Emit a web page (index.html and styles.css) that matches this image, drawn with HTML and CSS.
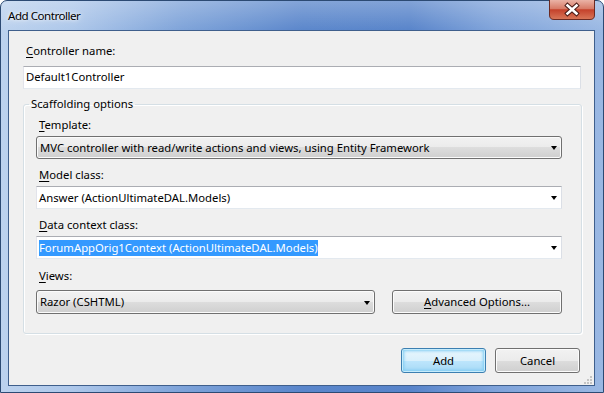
FILE: index.html
```html
<!DOCTYPE html>
<html>
<head>
<meta charset="utf-8">
<link rel="stylesheet" href="styles.css">
</head>
<body>
<div class="window">
  <div class="titlebar">
    <span class="title">Add Controller</span>
    <div class="close">
      <svg width="46" height="20" viewBox="0 0 46 20">
        <defs>
          <linearGradient id="cg" x1="0" y1="0" x2="0" y2="1">
            <stop offset="0" stop-color="#eab3a6"/>
            <stop offset="0.45" stop-color="#d77a66"/>
            <stop offset="0.5" stop-color="#c4412b"/>
            <stop offset="1" stop-color="#d9785a"/>
          </linearGradient>
        </defs>
        <path d="M0.5 0 V15 Q0.5 19.5 5 19.5 H41 Q45.5 19.5 45.5 15 V0" fill="url(#cg)" stroke="#6b2a22"/>
        <path d="M18.5 5.5 L27.5 13.5 M27.5 5.5 L18.5 13.5" stroke="#4a1c18" stroke-width="4.6" stroke-linecap="square"/>
        <path d="M18.5 5.5 L27.5 13.5 M27.5 5.5 L18.5 13.5" stroke="#ffffff" stroke-width="2.6" stroke-linecap="square"/>
      </svg>
    </div>
  </div>
  <div class="client">
    <div class="lbl first"><u>C</u>ontroller name:</div>
    <div class="textbox">Default1Controller</div>

    <fieldset class="group">
      <legend class="legend">Scaffolding options</legend>

      <div class="lbl"><u>T</u>emplate:</div>
      <div class="dropdown">
        <span class="val">MVC controller with read/write actions and views, using Entity Framework</span>
        <span class="arrow"></span>
      </div>

      <div class="lbl gap"><u>M</u>odel class:</div>
      <div class="combo">
        <span class="val">Answer (ActionUltimateDAL.Models)</span>
        <span class="arrow"></span>
      </div>

      <div class="lbl gap"><u>D</u>ata context class:</div>
      <div class="combo">
        <span class="val"><span class="sel">ForumAppOrig1Context (ActionUltimateDAL.Models)</span></span>
        <span class="arrow"></span>
      </div>

      <div class="lbl gap views-lbl"><u>V</u>iews:</div>
      <div class="views-row">
        <div class="dropdown views">
          <span class="val">Razor (CSHTML)</span>
          <span class="arrow"></span>
        </div>
        <div class="btn adv"><u>A</u>dvanced Options...</div>
      </div>
    </fieldset>

    <div class="actions">
      <div class="btn default">Add</div>
      <div class="btn">Cancel</div>
    </div>
    <div class="grip">
      <svg width="10" height="10" viewBox="0 0 10 10">
        <g fill="#c4c4c4">
          <rect x="7" y="1" width="2" height="2"/>
          <rect x="4" y="4" width="2" height="2"/>
          <rect x="7" y="4" width="2" height="2"/>
          <rect x="1" y="7" width="2" height="2"/>
          <rect x="4" y="7" width="2" height="2"/>
          <rect x="7" y="7" width="2" height="2"/>
        </g>
      </svg>
    </div>
  </div>
</div>
</body>
</html>
```
FILE: styles.css
```css
* { box-sizing: border-box; }
html, body { margin: 0; padding: 0; background: #ffffff; }
body {
  font-family: "Noto Sans", "Open Sans", "DejaVu Sans", sans-serif;
  font-size: 11.3px;
  color: #000;
}
.window {
  width: 604px;
  height: 393px;
  border: 1px solid #2c4a73;
  border-radius: 7px 7px 0 0;
  background:
    linear-gradient(180deg, rgba(255,255,255,0.25) 0px, rgba(255,255,255,0) 30px),
    linear-gradient(90deg, #bcd2ee 0%, #adc7ea 12%, #7ea3d9 30%, #5a86cb 50%, #5884ca 68%, #7fa3da 82%, #9ab8e3 100%);
  display: flex;
  flex-direction: column;
  padding: 0 8px 6px 7px;
}
.titlebar {
  height: 29px;
  display: flex;
  align-items: flex-start;
  justify-content: space-between;
}
.title {
  margin-top: 7px;
  font-size: 11.6px;
  line-height: 16px;
  color: #000;
  text-shadow: 0 0 6px rgba(255,255,255,0.9), 0 0 3px rgba(255,255,255,0.8);
  letter-spacing: -0.5px;
}
.close {
  width: 46px;
  height: 20px;
  margin-top: -1px;
  margin-right: 0px;
}
.close svg { display: block; }

.client {
  width: 587px;
  height: 356px;
  border: 1px solid #3f5f8c;
  background: #f0f0f0;
  padding: 11px 13px 0 14px;
  display: flex;
  flex-direction: column;
}
.lbl {
  line-height: 16px;
  height: 16px;
  margin-bottom: 3px;
  padding-left: 3px;
  white-space: nowrap;
}
.lbl.first { margin-top: 1px; margin-bottom: 7px; }
.lbl.gap { margin-top: 8px; }
.lbl.views-lbl { margin-top: 9px; margin-bottom: 6px; }
u { text-decoration: underline; text-underline-offset: 2px; }

.textbox {
  height: 23px;
  background: #fff;
  border: 1px solid #e3e9ef;
  border-top-color: #abadb3;
  border-left-color: #e2e3ea;
  border-right-color: #dbdfe6;
  padding-left: 2px;
  line-height: 20px;
  white-space: nowrap;
}

.group {
  margin: 7px -1px 0 0;
  padding: 5px 19px 19px 12px;
  border: 1px solid #d5dfe5;
  border-radius: 3px;
  box-shadow: inset 1px 1px 0 #ffffff, 1px 1px 0 #ffffff;
  min-width: 0;
}
.legend {
  padding: 0 2px;
  margin-left: -7px;
  line-height: 16px;
}

.dropdown, .combo {
  height: 23px;
  display: flex;
  align-items: center;
  justify-content: space-between;
  white-space: nowrap;
}
.dropdown {
  border: 1px solid #707070;
  border-radius: 3px;
  background: linear-gradient(180deg, #f2f2f2 0%, #ebebeb 50%, #dddddd 50%, #cfcfcf 100%);
  box-shadow: inset 0 0 0 1px #fbfbfb;
  padding: 0 4px 0 3px;
}
.combo {
  background: #fff;
  border: 1px solid #e3e9ef;
  border-top-color: #abadb3;
  border-left-color: #e2e3ea;
  border-right-color: #dbdfe6;
  padding: 0 4px 0 2px;
}
.val { line-height: 16px; }
.sel {
  background: #3399ff;
  color: #fff;
  display: inline-block;
  line-height: 16px;
}
.arrow {
  width: 0;
  height: 0;
  border-left: 3.5px solid transparent;
  border-right: 3.5px solid transparent;
  border-top: 4px solid #000;
  margin-right: 0px;
  margin-top: 1px;
}

.views-row {
  display: flex;
  justify-content: space-between;
}
.views { width: 339px; height: 24px; }
.btn {
  height: 24px;
  border: 1px solid #707070;
  border-radius: 3px;
  background: linear-gradient(180deg, #f2f2f2 0%, #ebebeb 50%, #dddddd 50%, #cfcfcf 100%);
  box-shadow: inset 0 0 0 1px #fcfcfc;
  display: flex;
  align-items: center;
  justify-content: center;
  line-height: 16px;
  white-space: nowrap;
}
.adv { width: 170px; }

.actions {
  display: flex;
  justify-content: flex-end;
  gap: 9px;
  margin-top: 14px;
  margin-right: 1px;
}
.actions .btn { width: 85px; height: 25px; }
.btn.default {
  border-color: #3c7fb1;
  background: linear-gradient(180deg, #eaf6fd 0%, #d9f0fc 50%, #bee6fd 50%, #a7d9f5 100%);
  box-shadow: inset 0 0 0 1px #c6ecfc, inset 0 0 3px 2px #7fcdf3;
}
.grip {
  align-self: flex-end;
  margin-top: auto;
  margin-right: -12px;
  margin-bottom: 0;
  width: 10px;
  height: 10px;
}
.grip svg { display: block; }
```
